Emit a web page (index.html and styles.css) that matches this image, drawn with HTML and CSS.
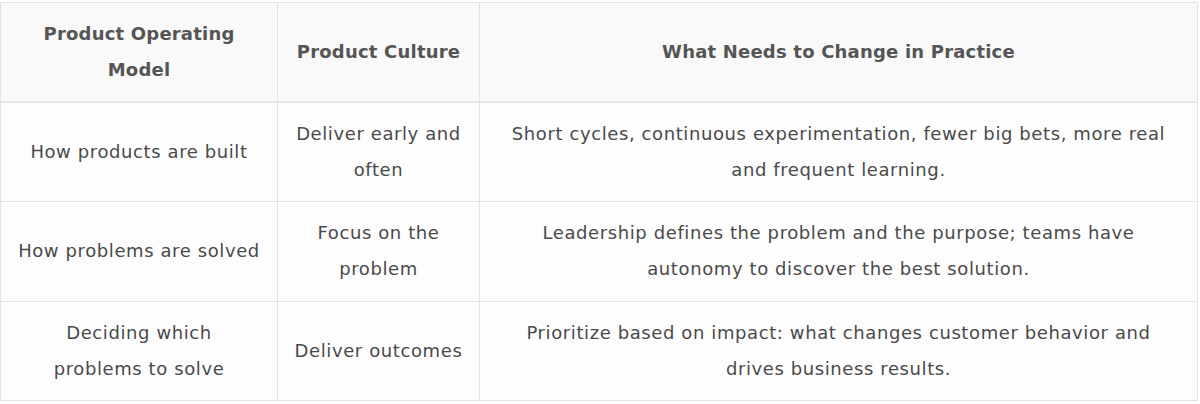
FILE: index.html
```html
<!DOCTYPE html>
<html>
<head>
<meta charset="utf-8">
<link rel="stylesheet" href="styles.css">
</head>
<body>
<table class="grid">
  <colgroup>
    <col class="c1">
    <col class="c2">
    <col class="c3">
  </colgroup>
  <thead>
    <tr>
      <th>Product Operating<br>Model</th>
      <th>Product Culture</th>
      <th>What Needs to Change in Practice</th>
    </tr>
  </thead>
  <tbody>
    <tr>
      <td>How products are built</td>
      <td>Deliver early and<br>often</td>
      <td>Short cycles, continuous experimentation, fewer big bets, more real<br>and frequent learning.</td>
    </tr>
    <tr>
      <td>How problems are solved</td>
      <td>Focus on the<br>problem</td>
      <td>Leadership defines the problem and the purpose; teams have<br>autonomy to discover the best solution.</td>
    </tr>
    <tr>
      <td>Deciding which<br>problems to solve</td>
      <td>Deliver outcomes</td>
      <td>Prioritize based on impact: what changes customer behavior and<br>drives business results.</td>
    </tr>
  </tbody>
</table>
</body>
</html>
```
FILE: styles.css
```css
html, body {
  margin: 0;
  padding: 0;
  background: #ffffff;
}
body {
  padding: 2px 3px 0 0;
  font-family: "DejaVu Sans", sans-serif;
  color: #4a4a4a;
}
.grid {
  width: 1197px;
  border-collapse: collapse;
  table-layout: fixed;
}
.c1 { width: 277px; }
.c2 { width: 202px; }
.c3 { width: 718px; }
.grid th,
.grid td {
  border: 1px solid #e3e3e3;
  text-align: center;
  vertical-align: middle;
  font-size: 18px;
  line-height: 36px;
  padding: 13px 6px 13.4px;
}
.grid th {
  background: #f9f9f9;
  color: #555555;
  font-weight: bold;
  letter-spacing: 0.2px;
  height: 72px;
  padding-bottom: 13px;
}
.grid thead tr {
  border-bottom: 2px solid #e6e6e6;
}
.grid td {
  background: #fdfdfd;
  font-weight: normal;
  letter-spacing: 0.6px;
  height: 72px;
}
```
